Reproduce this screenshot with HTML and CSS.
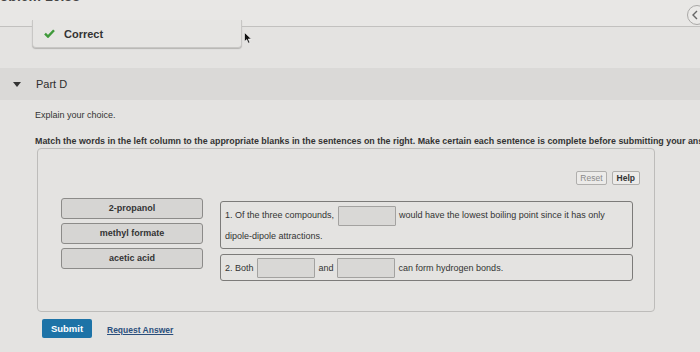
FILE: index.html
```html
<!DOCTYPE html>
<html lang="en">
<head>
  <meta charset="UTF-8" />
  <meta name="viewport" content="width=device-width, initial-scale=1.0"/>
  <title>Problem 10.33 | Part D</title>
  <link rel="stylesheet" href="styles.css">
</head>
<body>
  <div class="page">
    <div class="top-bar">
      <div class="problem-title">Problem 10.33</div>
      <div class="collapse-btn">
        <svg width="8" height="10" viewBox="0 0 8 10"><path d="M6 1 L2 5 L6 9" fill="none" stroke="#666" stroke-width="1.4"/></svg>
      </div>
    </div>

    <div class="feedback">
      <svg class="check" width="11" height="9" viewBox="0 0 11 9"><path d="M1 4.6 L4 7.6 L10 1.2" fill="none" stroke="#3f9a3a" stroke-width="2.4"/></svg>
      <span class="feedback-text">Correct</span>
      <svg class="cursor" width="8" height="12" viewBox="0 0 8 12"><path d="M0.5 0.5 L0.5 9.5 L2.7 7.6 L4.3 11.2 L5.8 10.5 L4.3 7 L7.3 7 Z" fill="#111" stroke="#fff" stroke-width="0.6"/></svg>
    </div>

    <div class="part-header"><span class="caret"></span>Part D</div>

    <div class="part-body">
      <p class="prompt">Explain your choice.</p>
      <p class="instructions">Match the words in the left column to the appropriate blanks in the sentences on the right. Make certain each sentence is complete before submitting your answer.</p>

      <div class="match-box">
        <div class="match-tools">
          <button class="tool-btn">Reset</button>
          <button class="tool-btn help">Help</button>
        </div>
        <div class="match-area">
          <div class="word-bank">
            <div class="word">2-propanol</div>
            <div class="word">methyl formate</div>
            <div class="word">acetic acid</div>
          </div>
          <div class="sentences">
            <div class="sentence">1. Of the three compounds, <span class="blank"></span> would have the lowest boiling point since it has only<br>dipole-dipole attractions.</div>
            <div class="sentence">2. Both <span class="blank"></span> and <span class="blank"></span> can form hydrogen bonds.</div>
          </div>
        </div>
      </div>

      <div class="actions">
        <button class="submit-btn">Submit</button>
        <a class="request-link" href="#">Request Answer</a>
      </div>
    </div>
  </div>
</body>
</html>
```

FILE: styles.css
```css
body {
  margin: 0;
  background: #e4e3e1;
  font-family: 'Liberation Sans', Arial, sans-serif;
  color: #2b2b2b;
}
.page {
  width: 700px;
  height: 352px;
  overflow: hidden;
  position: relative;
}
.top-bar {
  display: flow-root;
  height: 26px;
  background: #e8e7e5;
  border-bottom: 1px solid #c2c1bf;
  position: relative;
}
.problem-title {
  margin-top: -11px;
  margin-left: -15px;
  font-size: 14px;
  line-height: 14px;
  font-weight: 700;
  color: #444;
  white-space: nowrap;
}
.collapse-btn {
  position: absolute;
  left: 687px;
  top: 5px;
  width: 20px;
  height: 20px;
  border: 1px solid #aaa9a7;
  border-radius: 50%;
  background: #ebeae8;
  display: flex;
  align-items: center;
  padding-left: 3px;
  box-sizing: border-box;
}
.feedback {
  position: relative;
  margin: -7px 0 0 32px;
  width: 210px;
  height: 28px;
  box-sizing: border-box;
  background: #e6e5e3;
  border: 1px solid #c8c7c5;
  border-top: none;
  border-radius: 0 0 4px 4px;
  box-shadow: 0 1px 1px #b5b4b2;
  display: flex;
  align-items: center;
  padding-left: 11px;
  gap: 9px;
}
.feedback-text {
  font-size: 11px;
  font-weight: 700;
  color: #333;
}
.cursor {
  position: absolute;
  left: 211px;
  top: 12px;
}
.part-header {
  margin-top: 20px;
  height: 32px;
  background: #dad9d7;
  display: flex;
  align-items: center;
  font-size: 11px;
  color: #2e2e2e;
}
.caret {
  width: 0;
  height: 0;
  margin: 0 15px 0 13px;
  border-left: 4px solid transparent;
  border-right: 4px solid transparent;
  border-top: 5px solid #333;
}
.part-body {
  margin-left: 35px;
}
.prompt {
  margin: 8px 0 0;
  font-size: 9px;
  line-height: 14px;
  color: #333;
}
.instructions {
  margin: 13px 0 0;
  font-size: 8.9px;
  line-height: 12px;
  font-weight: 700;
  color: #333;
  white-space: nowrap;
}
.match-box {
  margin: 1px 0 0 2px;
  width: 618px;
  box-sizing: border-box;
  border: 1px solid #bdbcba;
  border-radius: 4px;
  padding: 22px 14px 30px 23px;
}
.match-tools {
  display: flex;
  justify-content: flex-end;
  gap: 5px;
}
.tool-btn {
  height: 14px;
  padding: 0 3px;
  font-family: inherit;
  font-size: 8.5px;
  color: #8a8a8a;
  background: #ecebe9;
  border: 1px solid #b0afad;
  border-radius: 2px;
}
.tool-btn.help {
  color: #333;
  font-weight: 700;
  padding: 0 4px;
}
.match-area {
  margin-top: 13px;
  display: flex;
  align-items: flex-start;
  gap: 17px;
}
.word-bank {
  display: flex;
  flex-direction: column;
  gap: 4px;
}
.word {
  width: 142px;
  height: 21px;
  box-sizing: border-box;
  background: #d6d5d3;
  border: 1px solid #8c8b89;
  border-radius: 3px;
  font-size: 9px;
  font-weight: 700;
  color: #333;
  text-align: center;
  line-height: 19px;
}
.sentences {
  margin-top: 3px;
  display: flex;
  flex-direction: column;
  gap: 5px;
}
.sentence {
  width: 413px;
  box-sizing: border-box;
  border: 1px solid #7c7b79;
  border-radius: 3px;
  padding: 3px 4px 2px;
  font-size: 9px;
  line-height: 20px;
  color: #333;
}
.blank {
  display: inline-block;
  width: 58px;
  height: 20px;
  box-sizing: border-box;
  vertical-align: middle;
  background: #d9d8d6;
  border: 1px solid #a3a2a0;
  border-radius: 1px;
  margin: 0 1px;
}
.actions {
  margin-top: 7px;
  padding-left: 7px;
  display: flex;
  align-items: center;
  gap: 15px;
}
.submit-btn {
  width: 50px;
  height: 19px;
  background: #1d73a7;
  color: #fff;
  border: none;
  border-radius: 2px;
  font-family: inherit;
  font-size: 9.5px;
  font-weight: 700;
}
.request-link {
  font-size: 8.5px;
  font-weight: 700;
  color: #2b4f7c;
  margin-top: 2px;
}
```
